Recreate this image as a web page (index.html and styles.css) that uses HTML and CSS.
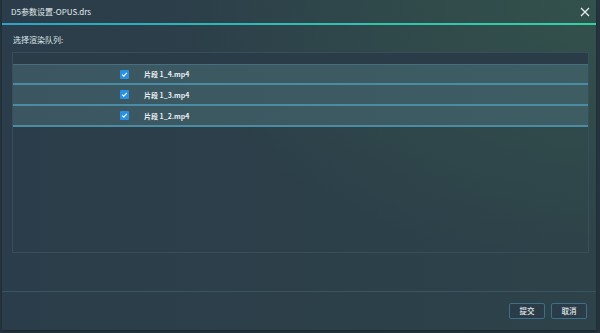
FILE: index.html
```html
<!DOCTYPE html>
<html lang="zh-CN">
<head>
<meta charset="utf-8">
<title>D5参数设置</title>
<link rel="stylesheet" href="styles.css">
</head>
<body>
<div class="dialog">
  <div class="header">
    <span class="title">D5参数设置-OPUS.drs</span>
    <svg class="close" width="10" height="10" viewBox="0 0 10 10"><path d="M1 1L9 9M9 1L1 9" stroke="#e8eef0" stroke-width="1.2" fill="none"/></svg>
  </div>
  <div class="accent"></div>
  <div class="content">
    <div class="label">选择渲染队列:</div>
    <div class="listbox">
      <div class="list-head"></div>
      <div class="row"><span class="check"><svg width="7" height="7" viewBox="0 0 7 7"><path d="M1.2 3.6L2.8 5.1L5.8 1.9" stroke="#fff" stroke-width="1.1" fill="none"/></svg></span><span class="name">片段 1_4.mp4</span></div>
      <div class="row"><span class="check"><svg width="7" height="7" viewBox="0 0 7 7"><path d="M1.2 3.6L2.8 5.1L5.8 1.9" stroke="#fff" stroke-width="1.1" fill="none"/></svg></span><span class="name">片段 1_3.mp4</span></div>
      <div class="row"><span class="check"><svg width="7" height="7" viewBox="0 0 7 7"><path d="M1.2 3.6L2.8 5.1L5.8 1.9" stroke="#fff" stroke-width="1.1" fill="none"/></svg></span><span class="name">片段 1_2.mp4</span></div>
    </div>
  </div>
  <div class="footer">
    <button class="btn">提交</button>
    <button class="btn">取消</button>
  </div>
</div>
</body>
</html>
```
FILE: styles.css
```css
* { box-sizing: border-box; }
html, body { margin: 0; padding: 0; }
body {
  width: 600px;
  height: 333px;
  background: #24333d;
  font-family: "Noto Sans CJK SC", "Noto Sans", sans-serif;
  overflow: hidden;
}
.dialog {
  margin-left: 2px;
  width: 594px;
  height: 330px;
  display: flex;
  flex-direction: column;
  background:
    radial-gradient(ellipse 420px 260px at 100% 0%, rgba(52, 84, 76, 0.85), rgba(52, 84, 76, 0) 100%),
    linear-gradient(90deg, #2b3d4a 0%, #2d4249 100%);
  box-shadow: 0 1px 2px rgba(0,0,0,0.3);
}
.header {
  height: 23px;
  display: flex;
  align-items: center;
  justify-content: space-between;
  padding: 0 6px 0 9px;
}
.title {
  color: #e4ecef;
  font-size: 8px;
  line-height: 1;
}
.close { display: block; }
.accent {
  height: 2px;
  background: linear-gradient(90deg, #2aa4c6 0%, #2cc0b4 50%, #2fd3a2 100%);
}
.content {
  flex: 1;
  padding: 9px 7px 0 10px;
  display: flex;
  flex-direction: column;
}
.label {
  color: #dfe7ea;
  font-size: 8px;
  line-height: 12px;
  padding-left: 1px;
}
.listbox {
  margin-top: 6px;
  height: 201px;
  border: 1px solid #384f5b;
  display: flex;
  flex-direction: column;
}
.list-head {
  height: 11px;
  background: #2a3c47;
}
.row {
  height: 21px;
  display: flex;
  align-items: center;
  background: linear-gradient(90deg, #3b5661 0%, #3e5d63 100%);
  border-top: 1px solid #456f80;
  border-bottom: 2px solid #4b8ca5;
}
.row + .row { border-top: none; }
.check {
  margin-left: 107px;
  width: 9px;
  height: 9px;
  border-radius: 1px;
  background: #2b90e0;
  display: flex;
  align-items: center;
  justify-content: center;
}
.check svg { display: block; }
.name {
  margin-left: 15px;
  color: #e8eef0;
  font-size: 7px;
  font-weight: 700;
}
.footer {
  height: 39px;
  border-top: 1px solid #3b5462;
  display: flex;
  justify-content: flex-end;
  align-items: center;
  gap: 6px;
  padding: 0 9px 0 0;
}
.btn {
  width: 36px;
  height: 16px;
  padding: 0;
  border: 1px solid #3e6e8a;
  border-radius: 2px;
  background: #2a3c47;
  color: #e3eaed;
  font-family: "Noto Sans CJK SC", sans-serif;
  font-size: 7.5px;
  font-weight: 500;
  line-height: 14px;
}
```
